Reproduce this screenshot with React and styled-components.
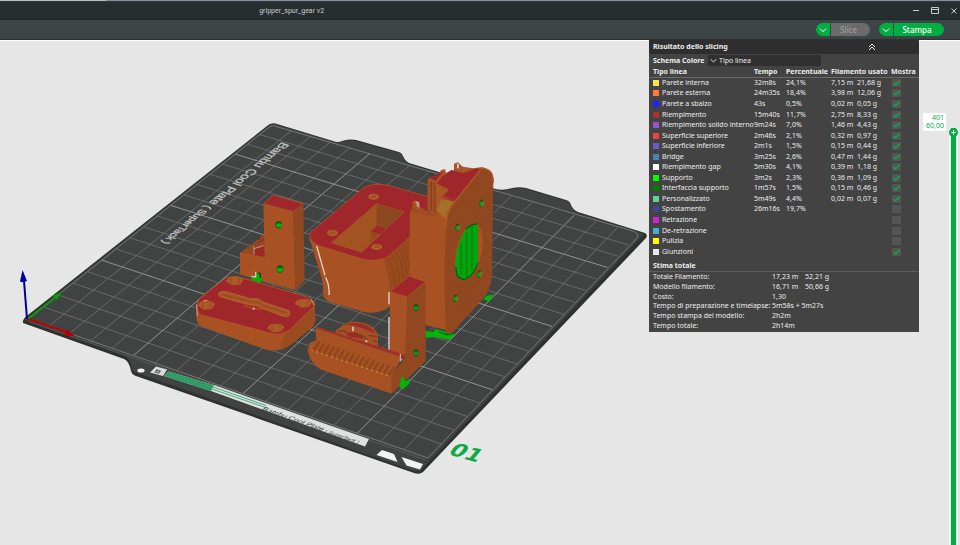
import React from 'react';
import styled, { createGlobalStyle } from 'styled-components';

const lines = [
  { name: 'Parete interna', color: '#ffe64d', time: '32m8s', pct: '24,1%', m: '7,15 m', g: '21,68 g', on: true },
  { name: 'Parete esterna', color: '#ff7d38', time: '24m35s', pct: '18,4%', m: '3,98 m', g: '12,06 g', on: true },
  { name: 'Parete a sbalzo', color: '#1f1fff', time: '43s', pct: '0,5%', m: '0,02 m', g: '0,05 g', on: true },
  { name: 'Riempimento', color: '#b03029', time: '15m40s', pct: '11,7%', m: '2,75 m', g: '8,33 g', on: true },
  { name: 'Riempimento solido interno', color: '#9654cc', time: '9m24s', pct: '7,0%', m: '1,46 m', g: '4,43 g', on: true },
  { name: 'Superficie superiore', color: '#f04040', time: '2m46s', pct: '2,1%', m: '0,32 m', g: '0,97 g', on: true },
  { name: 'Superficie inferiore', color: '#665cc7', time: '2m1s', pct: '1,5%', m: '0,15 m', g: '0,44 g', on: true },
  { name: 'Bridge', color: '#4d80ba', time: '3m25s', pct: '2,6%', m: '0,47 m', g: '1,44 g', on: true },
  { name: 'Riempimento gap', color: '#ffffff', time: '5m30s', pct: '4,1%', m: '0,39 m', g: '1,18 g', on: true },
  { name: 'Supporto', color: '#00ff00', time: '3m2s', pct: '2,3%', m: '0,36 m', g: '1,09 g', on: true },
  { name: 'Interfaccia supporto', color: '#008000', time: '1m57s', pct: '1,5%', m: '0,15 m', g: '0,46 g', on: true },
  { name: 'Personalizzato', color: '#5ed194', time: '5m49s', pct: '4,4%', m: '0,02 m', g: '0,07 g', on: true },
  { name: 'Spostamento', color: '#38489b', time: '26m16s', pct: '19,7%', on: false },
  { name: 'Retrazione', color: '#cd22d6', on: false },
  { name: 'De-retrazione', color: '#49add1', on: false },
  { name: 'Pulizia', color: '#ffff00', on: false },
  { name: 'Giunzioni', color: '#e6e6e6', on: true },
];

const totals = [
  ['Totale Filamento:', '17,23 m', '52,21 g'],
  ['Modello filamento:', '16,71 m', '50,66 g'],
  ['Costo:', '1,30'],
  ['Tempo di preparazione e timelapse:', '5m58s + 5m27s'],
  ['Tempo stampa del modello:', '2h2m'],
  ['Tempo totale:', '2h14m'],
];

// bed is 180mm, corners are front-left, front-right, back-right, back-left
const project = (u, v) => {
  const w = -0.0705 * u + 0.1304 * v + 1;
  return [
    (369.8 * u + 279.5 * v + 28) / w,
    (106.8 * u - 177.8 * v + 318) / w,
  ];
};

const BedLine = ({ from, to, bold }) => {
  const [x1, y1] = project(...from);
  const [x2, y2] = project(...to);
  return <line x1={x1} y1={y1} x2={x2} y2={y2} stroke={bold ? '#929493' : '#717372'} strokeWidth={bold ? 1 : 0.8} />;
};

const Bed = () => (
  <g>
    <path
      d="M23 322 Q22 318 28 314 L267 125 Q271 121 277 123 L333 140 Q338 142 344 139.500 Q350 138 356 139 L399 151 Q402 152 403 155 Q405 160 409 162 L492 187 Q500 190 508 188 Q518 185 526 187 L566 199 Q570 200 571 204 Q573 209 578 211 L645 232 Q648 234 646 237 L423 471 Q420 474 414 472 L136 375 Q132 374 131 370 Q129 360 124 358 Z"
      fill="#2f3131"
    />
    <path
      d="M24 319 L267 126 Q271 122 277 124 L333 140.500 Q338 142.500 344 140 Q350 139 356 140 L399 152 Q402 153 403 156 Q405 161 409 163 L492 188 Q500 191 508 189 Q518 186 526 188 L566 200 Q570 201 571 205 Q573 210 578 212 L644 233 L421 469 Q419 471 414 470 L137 372 Q133 371 132 368 Q130 358 125 355 Z"
      fill="#414343"
    />
    {Array.from({ length: 17 }, (_, i) => (i + 1) / 18).map((t, i) => (
      <React.Fragment key={t}>
        <BedLine from={[t, 0]} to={[t, 1]} bold={i % 5 === 4} />
        <BedLine from={[0, t]} to={[1, t]} bold={i % 5 === 4} />
      </React.Fragment>
    ))}
    <path d="M28 318 L268 127 Q272 123 278 126 L633 230 Q640 233 637 237 L428 457 Z" fill="none" stroke="#7c7e7d" strokeWidth=".9" />
    <path d="M30 321 L426 459" stroke="#5c5e5d" strokeWidth=".8" />

    <ellipse cx="141" cy="369.500" rx="3.600" ry="2" fill="#f2f2f2" />
    <path d="M156 365.500 L167 368.500 L163 375 L150 371.500 Z" fill="#dcdedd" />
    <path d="M156.500 368 L161.500 369.500 L159 373 L154 371.500 Z M159 368.500 L156.500 372.500 M155 370 L161 371.500" fill="#414343" stroke="#dcdedd" strokeWidth=".6" />
    <path d="M168 370.500 L214 384 L369 438 L365 445.500 L211 390 L164 375 Z" fill="#dfe1e1" />
    <path d="M168 370.500 L214 384 L211 390 L164 375 Z" fill="#2f9a66" />
    <path d="M213 386 L266 404.500 M212 388 L267 407 M167 373 L212 387" stroke="#37a06d" strokeWidth=".9" />
    <path d="M382 449 L394 453 L397.500 461 L376.500 454 Z M401.500 456 L423 463 L420 468.500 L406.500 464.500 Z" fill="#f2f3f3" />
    <BedLabel transform="matrix(-.76 .63 -.94 -.33 282 141)" fill="#c4c6c5" stroke="#c4c6c5" strokeWidth=".3" fontSize="12">
      Bambu Cool Plate <tspan fontSize="10">( SuperTack )</tspan>
    </BedLabel>
    <BedLabel transform="matrix(.945 .33 -.7 .6 261 409)" fill="#3b3d3d" fontSize="8">
      Bambu Cool Plate <tspan fontSize="6">( SuperTack )</tspan>
    </BedLabel>
    <PlateNumber transform="matrix(.98 .27 -.6 .72 447 453)" fill="#0ca945">01</PlateNumber>
  </g>
);

const Axes = () => (
  <g>
    <path d="M28 318 L55 297" stroke="#0a9a0a" strokeWidth="2" />
    <path d="M62 291 L56.500 299 L52.500 294.500 Z" fill="#0a9a0a" />
    <path d="M28 318 L66 331" stroke="#c00000" strokeWidth="2" />
    <path d="M75 335 L64 334.500 L67 328.500 Z" fill="#b00000" />
    <path d="M27 318 L24 280" stroke="#0000a0" strokeWidth="2" />
    <path d="M22.500 269 L27 280 Q23 282 20 280.500 Z" fill="#0000a0" />
  </g>
);

const TOP = '#9f262a';
const FRONT = '#a85122';
const SIDE = '#914820';

const BracketPart = () => (
  <g transform="translate(180 180) scale(.3333)">
    <path d="M180 213 L188 212 L190 204 L198 205 L200 197 L208 198 L210 190 L218 191 L220 183 L228 184 L230 176 L238 177 L241 168 L253 160 L253 240 L180 240 Z" fill="#94491f" />
    <path d="M253 168 L222 196 L222 222 L253 230 Z" fill={TOP} />
    <path d="M225 192 L253 176 L253 196 L228 203 Z" fill="#8d4a22" />
    <path d="M250 68 L340 92 L346 328 L180 280 L180 213 L222 222 L254 228 Z" fill={FRONT} />
    <path d="M340 92 L370 68 L374 300 L346 328 Z" fill={SIDE} />
    <path d="M252 68 L278 42 L370 68 L340 92 Z" fill={TOP} stroke="#b45b26" strokeWidth="2" />
    <path d="M222 195 V220 M222 203 L250 194" stroke="#c9967d" strokeWidth="3" fill="none" />
    <path d="M228 274 L240 278 L245 295 L242 306 L215 296 L212 291 L228 288 Z" fill="#00b400" />
    <path d="M227 272 V288 L214 286" stroke="#cfc2b8" strokeWidth="4" fill="none" />
    <path d="M234 276 L241 278 V290" stroke="#243818" strokeWidth="4" fill="none" />
    <g fill="#14551a">
      <ellipse cx="296" cy="131" rx="10" ry="11" />
      <ellipse cx="300" cy="264" rx="10" ry="11" />
    </g>
    <g fill="#05b40a">
      <ellipse cx="297" cy="133" rx="9" ry="6" />
      <ellipse cx="300" cy="266" rx="9" ry="6" />
    </g>
  </g>
);

const HousingPart = () => (
  <g transform="translate(300 150) scale(.3333)">
    <path d="M28 258 Q28 270 34 280 L66 385 Q70 400 70 435 Q75 449 95 455 L190 482 Q235 492 268 468 L332 425 L332 250 L60 240 Z" fill={FRONT} />
    <path d="M250 322 L332 250 V425 L268 468 Q280 420 250 322 Z" fill="#984a1f" />
    <path
      d="M262 318 Q300 380 280 450 M274 310 Q312 370 294 440 M286 298 Q320 360 308 430 M298 288 Q328 350 320 425 M308 278 Q332 330 328 400"
      stroke="#8b441b"
      strokeWidth="3"
      fill="none"
    />
    <path d="M30 245 L185 115 Q212 93 265 103 L385 137 L385 205 L332 255 L272 310 Q245 335 190 325 L60 285 Q24 270 30 245 Z" fill={TOP} stroke="#b45b26" strokeWidth="2" />
    <path d="M230 158 L312 183 L185 303 L95 275 Z" fill="#a15322" stroke="#b0612c" strokeWidth="2" />
    <path d="M230 158 L312 183 L258 233 L230 224 Z" fill="#8b4720" />
    <path d="M230 224 L258 233 L240 250 L212 242 Z" fill={TOP} />
    <path d="M212 242 L238 250 L212 276 L212 262 Z" fill="#964b1f" />
    {[[221, 137], [97, 246], [230, 288]].map(([x, y]) => (
      <g key={x}>
        <ellipse cx={x} cy={y} rx="16" ry="9" fill="#b1622c" />
        <path d={`M${x - 10} ${y + 4} L${x - 7} ${y - 5} L${x + 8} ${y - 5} L${x + 10} ${y + 4} Z`} fill="#a1501f" />
      </g>
    ))}
    <path d="M50 285 L75 373 M77 379 Q90 405 87 432" stroke="#e0d3ca" strokeWidth="4" fill="none" />
  </g>
);

const MotorPlatePart = () => (
  <g transform="translate(300 150) scale(.3333)">
    <path d="M376 540 L400 543 L405 534 L465 550 L450 567 L405 558 L378 560 Z M560 434 L580 430 L568 453 L550 444 Z" fill="#00b40a" />
    <path d="M405 540 L430 545 L465 550 L440 554 Z" fill="#08750e" />
    <path d="M329 190 Q330 176 337 174 L337 152 L355 149 L360 168 L384 182 L440 170 L440 140 L520 150 L450 540 L376 522 L328 500 Z" fill={FRONT} />
    <path d="M383 88 L388 80 L420 70 L422 58 L435 54 L438 66 L456 57 L462 62 L462 38 L474 34 L488 47 L520 52 L548 48 L548 70 L450 165 L405 185 L383 178 Z" fill="#a9552a" />
    <path d="M410 100 L425 78 L455 57 L490 66 L530 52 L548 58 L462 152 L428 136 L446 118 Z" fill={TOP} />
    <path d="M388 82 L430 60 L408 90 Z" fill={TOP} />
    <path d="M383 88 L405 94 V185 L383 178 Z" fill="#9f4f22" />
    <path d="M394 92 V180 M405 94 V185" stroke="#7d3e1b" strokeWidth="3" />
    <path d="M407 96 L444 114 L410 150 Z" fill="#aa5724" />
    <path d="M425 142 L462 150 Q440 175 438 205 L410 180 Z" fill="#a37129" />
    <path d="M426 136 L468 144 M422 142 L464 150" stroke="#a33a28" strokeWidth="3" />
    <path d="M438 545 Q430 380 438 225 Q440 180 462 155 L535 62 Q550 42 572 60 Q581 70 580 95 L576 365 Q576 415 545 448 L460 542 Q450 550 438 545 Z" fill={SIDE} />
    <path d="M438 225 Q440 180 462 155 L540 58 M545 51 Q581 55 580 95" fill="none" stroke="#b05a26" strokeWidth="4" />
    <path
      d="M448 200 L573 323 M445 230 L573 358 M445 262 L568 388 M444 295 L560 412 M444 330 L548 434 M443 365 L534 456 M443 400 L520 477 M443 435 L502 496 M443 470 L486 514 M462 170 L574 283 M478 150 L576 248 M494 130 L577 213 M510 110 L578 178 M526 90 L578 142"
      stroke="#89441d"
      strokeWidth="2"
    />
    <path d="M344 149 L358 154 V170 L350 166 V160 Z" fill="#b9a090" />
    <path d="M471 37 L477 39 V53 L471 51 Z" fill="#d5c3b8" />
    <path d="M332 180 L336 172 L341 182 L346 174 L351 184 L356 176 L361 187 L366 178 L371 189 L376 181 L384 193 L390 184 L396 194 L410 186" fill="none" stroke="#914620" strokeWidth="3" />
    <ellipse cx="507" cy="303" rx="38" ry="88" transform="rotate(13 507 303)" fill="#a65326" />
    <path d="M525 218 Q533 219 534 226 V335 Q520 377 494 386 Q466 387 466 348 Q468 278 498 235 Q511 219 525 218 Z" fill="#05a50c" />
    <path d="M483 275 V372 M500 242 V382 M516 225 V360" stroke="#078e0d" strokeWidth="7" />
    <path d="M468 348 Q467 385 494 386 Q520 377 534 335 M498 235 Q511 219 530 219" stroke="#0d5a12" strokeWidth="4" fill="none" />
    {[[545, 157], [473, 229], [539, 369], [467, 442]].map(([x, y]) => (
      <g key={x} transform={`rotate(13 ${x} ${y})`}>
        <ellipse cx={x} cy={y} rx="7" ry="11" fill="#174c14" />
        <path d={`M${x + 2} ${y - 11} q8 8 3 20 l-4 -4 Z`} fill="#b56b3a" />
        <ellipse cx={x - 1} cy={y + 2} rx="5" ry="7" fill="#05a50c" />
      </g>
    ))}
  </g>
);

const BasePart = () => (
  <g transform="translate(180 180) scale(.3333)">
    <path d="M49 372 V413 Q50 430 70 438 L255 505 Q292 516 330 493 L395 440 Q407 430 406 408 L404 370 Z" fill={FRONT} />
    <path d="M318 455 L404 375 L406 410 Q407 430 395 440 L330 493 Q318 502 300 506 Z" fill="#9a4c20" />
    <path d="M58 353 L130 296 Q148 283 178 288 L382 348 Q410 358 400 378 L330 446 Q305 466 268 456 L65 402 Q40 388 58 353 Z" fill={TOP} stroke="#b55c28" strokeWidth="2.500" />
    {[[165, 300], [80, 373], [371, 367], [288, 441]].map(([x, y]) => (
      <g key={x}>
        <path d={`M${x - 27} ${y} L${x - 16} ${y - 12} L${x + 13} ${y - 13} L${x + 26} ${y - 4} L${x + 16} ${y + 11} L${x - 10} ${y + 13} Z`} fill="#aa5927" />
        <path d={`M${x - 12} ${y - 11} V${y + 12} M${x + 12} ${y - 11} V${y + 11}`} stroke="#964b20" strokeWidth="3" />
      </g>
    ))}
    <path d="M115 337 Q125 327 145 334 L215 354 Q232 348 250 364 L325 388 Q335 396 325 406 Q312 408 298 402 L244 380 Q228 372 208 372 L130 350 Q112 345 115 337 Z" fill="#a85625" stroke="#c07038" strokeWidth="2" />
    <path d="M130 342 L222 364 Q235 360 250 374 L320 396" fill="none" stroke="#964b20" strokeWidth="4" />
    <path d="M190 374 L225 384 L262 384" fill="none" stroke="#b45b26" strokeWidth="3" />
    <circle cx="221" cy="383" r="4" fill="#c99a84" />
    <path d="M50 370 L52 405 M70 360 L82 358 M393 355 L403 372" stroke="#d5a58c" strokeWidth="3" />
  </g>
);

const teeth = Array.from({ length: 16 }, (_, i) => [66 + i * 15, 267 + i * 5]);

const RackPart = () => (
  <g transform="translate(290 260) scale(.3333)">
    <path d="M135 210 L155 195 Q170 180 205 183 Q245 188 257 210 L264 218 V256 L200 240 L140 215 Z" fill="#a35127" />
    <path d="M160 192 Q195 178 235 196 Q250 205 253 216 L215 200 Q185 188 160 192 Z M170 218 Q190 208 215 222 L220 234 L175 225 Z" fill={TOP} />
    <path d="M146 212 L160 208 L172 216 M180 232 Q200 208 232 236 M236 224 L262 226 M250 238 L262 244" stroke="#7e3c1b" strokeWidth="4" fill="none" />
    <path d="M189 197 V211 M229 237 V246" stroke="#dcc7bb" strokeWidth="5" />
    <path d="M297 94 V130 M297 168 V266" stroke="#e4dcd6" strokeWidth="4" />
    <path d="M300 92 L352 108 V292 L300 268 Z" fill={FRONT} />
    <path d="M352 108 L407 62 V300 L305 398 L303 345 L345 290 Z" fill={SIDE} />
    <path d="M300 92 L357 45 L407 62 L352 108 Z" fill={TOP} stroke="#b45b26" strokeWidth="2" />
    <path d="M78 197 L335 278 L330 300 L305 345 V398 L90 325 Q60 305 53 268 L60 245 L78 238 Z" fill={FRONT} />
    <path d="M78 197 L345 281 L342 293 L326 286 L78 202 Z" fill="#a2302a" />
    {teeth.map(([x, y]) => (
      <g key={x}>
        <path d={`M${x} ${y} L${x + 20} ${y - 28} L${x + 24} ${y - 22} L${x + 10} ${y + 2} Z`} fill="#8f461f" />
        <path d={`M${x - 2} ${y + 1} h5`} stroke="#c98e35" strokeWidth="4" />
      </g>
    ))}
    <path d="M331 278 V302 M337 350 V372" stroke="#d8c4b6" strokeWidth="3" />
    <path d="M334 348 L342 350 L345 360 L362 356 L358 368 L340 385 L328 378 Z" fill="#00b40a" />
    <ellipse cx="378" cy="139" rx="7" ry="11" fill="#17521a" />
    <ellipse cx="378" cy="275" rx="7" ry="11" fill="#17521a" />
    <ellipse cx="378" cy="141" rx="6" ry="6" fill="#05a50c" />
    <ellipse cx="378" cy="277" rx="6" ry="6" fill="#05a50c" />
  </g>
);

const ChevronDown = ({ size = 8 }) => (
  <svg width={size} height={size} viewBox="0 0 8 8" fill="none" stroke="currentColor" strokeLinecap="round" aria-hidden="true">
    <path d="M1 3 L4 5.500 L7 3" />
  </svg>
);

const SplitButton = ({ label, disabled, wide }) => (
  <Split>
    <SplitArrow aria-label={`${label} menu`}>
      <ChevronDown />
    </SplitArrow>
    <SplitMain disabled={disabled} $wide={wide}>{label}</SplitMain>
  </Split>
);

const SlicingPanel = () => (
  <Panel>
    <PanelHeader>
      <h2>Risultato dello slicing</h2>
      <CollapseButton aria-label="Comprimi">
        <svg width="8" height="8" viewBox="0 0 8 8" fill="none" stroke="currentColor">
          <path d="M1 4 L4 1 L7 4 M1 7 L4 4 L7 7" />
        </svg>
      </CollapseButton>
    </PanelHeader>
    <SchemeRow>
      <SchemeLabel htmlFor="scheme">Schema Colore</SchemeLabel>
      <SelectBox>
        <ChevronDown size={7} />
        <select id="scheme" defaultValue="Tipo linea">
          <option>Tipo linea</option>
        </select>
      </SelectBox>
    </SchemeRow>
    <LineTable>
      <colgroup>
        <Col $w={105} />
        <Col $w={32} />
        <Col $w={45} />
        <Col $w={60} />
        <Col />
      </colgroup>
      <thead>
        <tr>
          <th>Tipo linea</th>
          <th>Tempo</th>
          <th>Percentuale</th>
          <th>Filamento usato</th>
          <th>Mostra</th>
        </tr>
      </thead>
      <tbody>
        {lines.map((line) => (
          <tr key={line.name}>
            <td>
              <LineName htmlFor={line.name}>
                <Swatch $color={line.color} />
                {line.name}
              </LineName>
            </td>
            <td>{line.time}</td>
            <td>{line.pct}</td>
            <td>
              {line.m && <Amount>{line.m}</Amount>}
              {line.g}
            </td>
            <td>
              <Check type="checkbox" id={line.name} defaultChecked={line.on} />
            </td>
          </tr>
        ))}
      </tbody>
    </LineTable>
    <TotalTitle>Stima totale</TotalTitle>
    <TotalTable>
      <tbody>
        {totals.map(([label, first, second]) => (
          <tr key={label}>
            <th scope="row">{label}</th>
            <td>
              {second ? <TotalAmount>{first}</TotalAmount> : first}
              {second}
            </td>
          </tr>
        ))}
      </tbody>
    </TotalTable>
  </Panel>
);

const App = () => {
  return (
    <Window>
      <GlobalStyle />
      <TopStrip />
      <TitleBar>
        <Title>gripper_spur_gear v2</Title>
        <WindowButtons>
          <WindowButton aria-label="Minimize">
            <svg width="10" height="10" viewBox="0 0 10 10" stroke="currentColor"><path d="M2 4.500 H8" /></svg>
          </WindowButton>
          <WindowButton aria-label="Maximize">
            <svg width="10" height="10" viewBox="0 0 10 10" stroke="currentColor" fill="none"><path d="M1.500 1.500 H8.500 V7.500 H1.500 Z M1.500 3.500 H8.500" /></svg>
          </WindowButton>
          <WindowButton aria-label="Close">
            <svg width="10" height="10" viewBox="0 0 10 10" stroke="currentColor"><path d="M2.500 2.500 L7.500 7.500 M7.500 2.500 L2.500 7.500" /></svg>
          </WindowButton>
        </WindowButtons>
      </TitleBar>
      <Toolbar>
        <SplitButton label="Slice" disabled />
        <SplitButton label="Stampa" wide />
      </Toolbar>
      <Viewport>
        <Scene viewBox="0 40 960 505" preserveAspectRatio="xMinYMin slice">
          <Bed />
          <Axes />
          <BracketPart />
          <HousingPart />
          <MotorPlatePart />
          <BasePart />
          <RackPart />
        </Scene>
        <SlicingPanel />
        <LayerControl>
          <LayerTag htmlFor="layer">
            <span>401</span>
            <span>60,00</span>
          </LayerTag>
          <LayerSlider id="layer" type="range" min="1" max="401" defaultValue="401" />
        </LayerControl>
      </Viewport>
    </Window>
  );
};

export default App;

const GlobalStyle = createGlobalStyle`
  * {
    box-sizing: border-box;
  }

  body {
    margin: 0;
    font-family: "Noto Sans", "Open Sans", sans-serif;
    font-size: 7px;
    overflow: hidden;
  }

  button, select, input {
    font: inherit;
    color: inherit;
    border: 0;
    margin: 0;
    padding: 0;
  }

  h1, h2, h3 {
    margin: 0;
    font-size: inherit;
  }
`
const Window = styled.div`
  display: flex;
  flex-direction: column;
  height: 100vh;
`
const TopStrip = styled.div`
  height: 2px;
  border-bottom: 1px solid #33393d;
  background: linear-gradient(to right, #b9bcbc 11%, #858b98 11%);
`
const TitleBar = styled.header`
  display: flex;
  align-items: center;
  justify-content: space-between;
  height: 17px;
  padding: 0 1px 0 27%;
  background: #272e30;
  color: #c9cccc;
`
const Title = styled.h1`
  font-family: Roboto, sans-serif;
  font-weight: 400;
`
const WindowButtons = styled.div`
  display: flex;
  gap: 9px;
`
const WindowButton = styled.button`
  display: flex;
  background: none;
`
const Toolbar = styled.div`
  display: flex;
  align-items: center;
  justify-content: flex-end;
  gap: 9px;
  height: 21px;
  padding-right: 16px;
  border-top: 1px solid #1f2627;
  border-bottom: 1px solid #2c3233;
  background: #3d4446;
`
const Split = styled.div`
  display: flex;
  gap: 1px;
  height: 13px;
`
const SplitArrow = styled.button`
  display: flex;
  align-items: center;
  justify-content: center;
  width: 14px;
  border-radius: 7px 0 0 7px;
  background: #00ae42;
  color: #fff;
`
const SplitMain = styled.button`
  width: ${({ $wide }) => ($wide ? 50 : 39)}px;
  padding-right: 4px;
  border-radius: 0 7px 7px 0;
  background: #00ae42;
  color: #fff;
  font-size: 8px;
  font-weight: 500;
  line-height: 13px;

  &:disabled {
    background: #6b6b6b;
    color: #9b9b9b;
  }
`
const Viewport = styled.main`
  position: relative;
  flex: 1;
  border-top: 1px solid #fff;
  background: #e6e6e6;
`
const Scene = styled.svg`
  position: absolute;
  inset: 0;
  width: 100%;
  height: 100%;
`
const BedLabel = styled.text`
  font-family: "Liberation Sans", sans-serif;
`
const PlateNumber = styled.text`
  font-family: "DejaVu Sans", sans-serif;
  font-size: 22px;
  font-weight: 700;
`
const Panel = styled.section`
  position: absolute;
  top: -1px;
  right: 41px;
  width: 270px;
  padding-bottom: 1px;
  background: #434343;
  color: #ededed;
`
const PanelHeader = styled.div`
  display: flex;
  align-items: center;
  justify-content: space-between;
  height: 14px;
  padding: 0 43px 0 4px;
  background: #2e2e2e;

  h2 {
    line-height: 8px;
  }
`
const CollapseButton = styled.button`
  display: flex;
  background: none;
`
const SchemeRow = styled.div`
  display: flex;
  align-items: center;
  gap: 4px;
  height: 13px;
  padding: 0 4px;
`
const SchemeLabel = styled.label`
  width: 51px;
  font-weight: 700;
  line-height: 11px;
  white-space: nowrap;
`
const SelectBox = styled.div`
  display: flex;
  align-items: center;
  gap: 2px;
  width: 113px;
  height: 11px;
  padding-left: 2px;
  background: #303030;

  select {
    flex: 1;
    appearance: none;
    background: none;
    line-height: 11px;
  }
`
const Col = styled.col`
  width: ${({ $w }) => ($w ? `${$w}px` : 'auto')};
`
const LineTable = styled.table`
  width: 100%;
  height: 190px;
  table-layout: fixed;
  border-collapse: collapse;
  white-space: nowrap;

  th {
    height: 10px;
    padding: 0;
    border-bottom: 1px solid #6a6a6a;
    line-height: 9px;
    text-align: left;
  }

  td {
    padding: 0;
    line-height: 8px;
  }

  th:first-child, td:first-child {
    padding-left: 4px;
  }
`
const LineName = styled.label`
  display: flex;
  align-items: center;
  gap: 3px;
`
const Swatch = styled.span`
  width: 6px;
  height: 6px;
  background: ${({ $color }) => $color};
`
const Amount = styled.span`
  display: inline-block;
  width: 26px;
`
const Check = styled.input`
  display: block;
  appearance: none;
  width: 9px;
  height: 8px;
  margin-left: 1px;
  background: #555;

  &:checked {
    background: #555 url('data:image/svg+xml,<svg xmlns="http://www.w3.org/2000/svg" viewBox="0 0 9 8"><path d="M1.500 4 L3.500 6 L7.500 2" fill="none" stroke="%2300b846" stroke-width="1.200"/></svg>');
  }
`
const TotalTitle = styled.h3`
  padding: 4px 4px 1px;
  border-bottom: 1px solid #5e5e5e;
  line-height: 9px;
`
const TotalTable = styled.table`
  width: 100%;
  height: 59px;
  border-spacing: 0;
  white-space: nowrap;

  th {
    width: 123px;
    padding: 0 0 0 4px;
    font-weight: 400;
    line-height: 8px;
    text-align: left;
  }

  td {
    padding: 0;
    line-height: 8px;
  }
`
const TotalAmount = styled.span`
  display: inline-block;
  width: 33px;
`
const LayerControl = styled.div`
  position: absolute;
  top: 72px;
  right: 2px;
  bottom: 0;
  display: flex;
  align-items: flex-start;
  gap: 3px;
`
const LayerTag = styled.label`
  display: flex;
  flex-direction: column;
  align-items: flex-end;
  width: 23px;
  padding: 1px 2px;
  border-radius: 1px;
  background: #fff;
  color: #00ae42;
  line-height: 8px;
`
const LayerSlider = styled.input`
  appearance: none;
  writing-mode: vertical-lr;
  direction: rtl;
  width: 9px;
  height: calc(100% - 15px);
  margin-top: 15px;
  background: none;

  &::-webkit-slider-runnable-track {
    width: 9px;
    height: 100%;
    border: solid #fff;
    border-width: 0 1px;
    background: linear-gradient(to right, #e6e6e6 1px, #00ae42 1px, #00ae42 6px, #e6e6e6 6px);
  }

  &::-webkit-slider-thumb {
    appearance: none;
    width: 9px;
    height: 9px;
    margin-left: -1px;
    border-radius: 50%;
    background:
      linear-gradient(#fff, #fff) center / 5px 1px no-repeat,
      linear-gradient(#fff, #fff) center / 1px 5px no-repeat,
      #00ae42;
  }
`
